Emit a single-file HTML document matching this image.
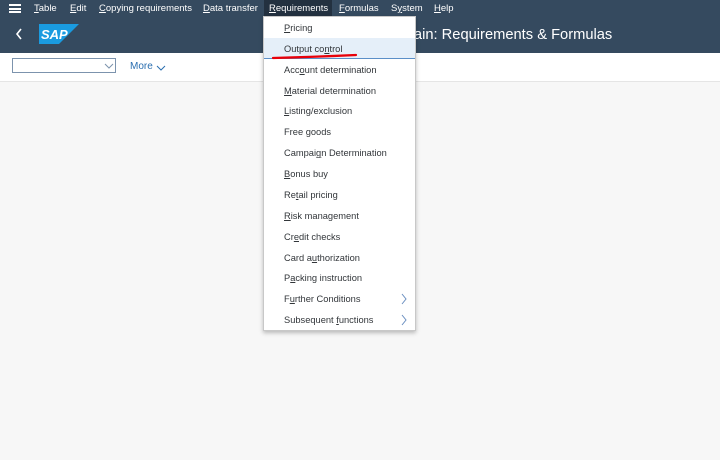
<!DOCTYPE html>
<html><head><style>
*{margin:0;padding:0;box-sizing:border-box}
body{width:720px;height:460px;overflow:hidden;background:#f7f7f7;font-family:"Liberation Sans",sans-serif;position:relative}
.top{position:absolute;left:0;top:0;width:720px;height:53px;background:#354a5f}
.mb{position:absolute;top:0;height:17px;font-size:9.5px;color:#fff;line-height:17px}
.mb span{position:absolute;white-space:nowrap}
u{text-decoration:underline;text-underline-offset:1px}
.tb{position:absolute;left:0;top:53px;width:720px;height:29px;background:#fff;border-bottom:1px solid #e5e5e5}
.menu{position:absolute;left:263px;top:16px;width:153px;height:315px;background:#fff;border:1px solid #c8c8c8;box-shadow:0 2px 4px rgba(0,0,0,.25);z-index:5}
.it{position:absolute;left:20px;font-size:9.3px;color:#32363a;line-height:21px;white-space:nowrap;margin-top:1px}
</style></head><body>
<div class="top"></div>
<div class="mb">
<span style="left:9px;top:4px;width:12px;height:9px;border-top:2px solid #fff;border-bottom:2px solid #fff"></span>
<span style="left:9px;top:7.5px;width:12px;height:2px;background:#fff"></span>
<span style="left:34px"><u>T</u>able</span>
<span style="left:70px"><u>E</u>dit</span>
<span style="left:99px"><u>C</u>opying requirements</span>
<span style="left:203px"><u>D</u>ata transfer</span>
<span style="left:264px;width:68px;height:16px;background:#233140"></span>
<span style="left:269px"><u>R</u>equirements</span>
<span style="left:339px"><u>F</u>ormulas</span>
<span style="left:391px">S<u>y</u>stem</span>
<span style="left:434px"><u>H</u>elp</span>
</div>
<svg style="position:absolute;left:14px;top:27px" width="10" height="14"><path d="M7 2 L3 7 L7 12" stroke="#fff" stroke-width="1.6" fill="none"/></svg>
<svg style="position:absolute;left:39px;top:24px" width="40" height="20"><polygon points="0,0 40,0 20,20 0,20" fill="#1a9be0"/><text x="2" y="15" font-family="Liberation Sans" font-weight="bold" font-size="13" fill="#fff" font-style="italic">SAP</text></svg>
<div style="position:absolute;left:378px;top:27px;color:#fff;font-size:14.7px;white-space:nowrap">Maintain: Requirements &amp; Formulas</div>
<div class="tb">
<div style="position:absolute;left:12px;top:5px;width:104px;height:15px;border:1px solid #7c93ad"></div>
<svg style="position:absolute;left:104px;top:10px" width="10" height="6"><path d="M1 1 L5 5 L9 1" stroke="#7c93ad" fill="none"/></svg>
<div style="position:absolute;left:130px;top:8px;font-size:10px;color:#2a6eb0">More</div>
<svg style="position:absolute;left:156px;top:12px" width="10" height="6"><path d="M1 1 L5 5 L9 1" stroke="#2a6eb0" fill="none"/></svg>
</div>
<div class="menu">
<div style="position:absolute;left:0;top:21px;width:151px;height:21px;background:#e5eff9;border-bottom:1px solid #5b8fc8"></div>
<svg style="position:absolute;left:8px;top:36px" width="90" height="8"><path d="M1 5 Q40 4 84 2" stroke="#e8000a" stroke-width="2.2" fill="none" stroke-linecap="round"/></svg>
<div class="it" style="top:0"><u>P</u>ricing</div>
<div class="it" style="top:21px">Output co<u>n</u>trol</div>
<div class="it" style="top:42px">Acc<u>o</u>unt determination</div>
<div class="it" style="top:62.6px"><u>M</u>aterial determination</div>
<div class="it" style="top:83.4px"><u>L</u>isting/exclusion</div>
<div class="it" style="top:104.3px">Free goods</div>
<div class="it" style="top:125.2px">Campai<u>g</u>n Determination</div>
<div class="it" style="top:146px"><u>B</u>onus buy</div>
<div class="it" style="top:166.9px">Re<u>t</u>ail pricing</div>
<div class="it" style="top:187.7px"><u>R</u>isk management</div>
<div class="it" style="top:208.6px">Cr<u>e</u>dit checks</div>
<div class="it" style="top:229.5px">Card a<u>u</u>thorization</div>
<div class="it" style="top:250.3px">P<u>a</u>cking instruction</div>
<div class="it" style="top:271.2px">F<u>u</u>rther Conditions</div>
<div class="it" style="top:292px">Subsequent <u>f</u>unctions</div>
<svg style="position:absolute;left:136px;top:276px" width="8" height="12"><path d="M2 1 L6 6 L2 11" stroke="#6a8fc0" fill="none"/></svg>
<svg style="position:absolute;left:136px;top:297px" width="8" height="12"><path d="M2 1 L6 6 L2 11" stroke="#6a8fc0" fill="none"/></svg>
</div>
</body></html>
